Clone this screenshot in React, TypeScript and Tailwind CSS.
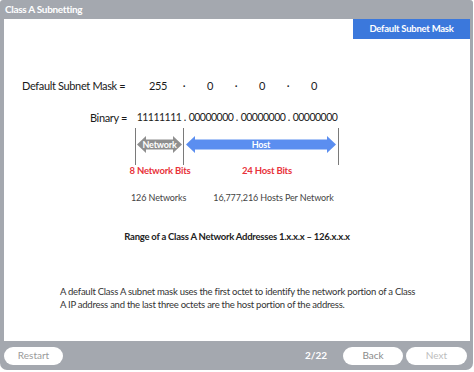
import React from "react";

const font = { fontFamily: "Lato, 'Open Sans', sans-serif" };

function DoubleArrow({ width, color, label }: { width: number; color: string; label: string }) {
  const h = 17;
  const head = 9;
  const shaft = 5;
  const mid = h / 2;
  const pts = [
    [0, mid],
    [head, 0],
    [head, mid - shaft],
    [width - head, mid - shaft],
    [width - head, 0],
    [width, mid],
    [width - head, h],
    [width - head, mid + shaft],
    [head, mid + shaft],
    [head, h],
  ]
    .map((p) => p.join(","))
    .join(" ");
  return (
    <div className="relative" style={{ width, height: h }}>
      <svg width={width} height={h} viewBox={`0 0 ${width} ${h}`} className="block">
        <polygon points={pts} fill={color} />
      </svg>
      <span className="absolute inset-0 flex items-center justify-center text-[9px] tracking-[-0.2px] font-bold text-white leading-none">
        {label}
      </span>
    </div>
  );
}

export default function App() {
  const cells = ["255", "·", "0", "·", "0", "·", "0"];
  const octets = ["11111111", ".", "00000000", ".", "00000000", ".", "00000000"];
  return (
    <div className="w-[474px] h-[372px] bg-white" style={font}>
      <div className="w-[473px] h-[370px] bg-[#a4a8af] rounded-t-[3px] rounded-b-[7px] flex flex-col">
        {/* title bar */}
        <div className="h-[19px] flex items-center pl-[5px] text-[10px] tracking-[-0.3px] font-bold text-white">
          Class A Subnetting
        </div>

        {/* content */}
        <div className="ml-[4px] mr-[3px] h-[322px] bg-white flex flex-col">
          <div className="flex justify-end">
            <button className="w-[117px] h-[20px] bg-[#3b78dc] text-white text-[9.5px] tracking-[-0.25px] font-bold">
              Default Subnet Mask
            </button>
          </div>

          {/* subnet mask row */}
          <div className="mt-[40px] h-[14px] flex items-center text-[11px] tracking-[-0.35px] text-[#1a1a1a]">
            <div className="w-[141px] pl-[18px] whitespace-nowrap">Default Subnet Mask =</div>
            {cells.map((c, i) => (
              <div key={i} className="w-[26px] text-center">
                {c}
              </div>
            ))}
          </div>

          {/* binary row */}
          <div className="mt-[18px] h-[14px] flex items-center text-[11px] text-[#1a1a1a]">
            <div className="w-[123px] text-right tracking-[-0.35px] whitespace-nowrap">Binary =</div>
            <div className="w-[9px]" />
            {octets.map((c, i) => (
              <div
                key={i}
                className={(i % 2 === 0 ? "w-[46px] tracking-[-0.5px]" : "w-[6px]") + " text-center text-[10.5px]"}
              >
                {c}
              </div>
            ))}
          </div>

          {/* arrows */}
          <div className="mt-[3px] h-[37px] flex ml-[131px]">
            <div className="w-[48px] border-l border-[#7a7a7a] flex items-center justify-center pb-[4px]">
              <DoubleArrow width={45} color="#8f8f8f" label="Network" />
            </div>
            <div className="w-[156px] border-l border-r border-[#7a7a7a] flex items-center justify-center pb-[4px]">
              <DoubleArrow width={150} color="#5b8ef0" label="Host" />
            </div>
          </div>

          <div className="h-[12px] flex items-center text-[9.5px] tracking-[-0.2px] font-bold text-[#e8323a] whitespace-nowrap">
            <div className="ml-[122px] w-[68px] text-center">8 Network Bits</div>
            <div className="ml-[38px] w-[70px] text-center">24 Host Bits</div>
          </div>

          <div className="mt-[15px] h-[12px] flex items-center text-[9px] tracking-[-0.1px] text-[#444] whitespace-nowrap">
            <div className="ml-[127px]">126 Networks</div>
            <div className="ml-[27px]">16,777,216 Hosts Per Network</div>
          </div>

          <div className="mt-[27px] h-[12px] flex items-center justify-center text-[9.5px] tracking-[-0.25px] font-bold text-[#222] whitespace-nowrap">
            Range of a Class A Network Addresses 1.x.x.x – 126.x.x.x
          </div>

          <p className="mt-[42px] ml-[56px] text-[9.5px] tracking-[-0.25px] leading-[13px] text-[#333] whitespace-nowrap">
            A default Class A subnet mask uses the first octet to identify the network portion of a Class
            <br />A IP address and the last three octets are the host portion of the address.
          </p>
        </div>

        {/* footer */}
        <div className="flex-1 flex items-center pl-[4px] pr-[6px]">
          <button className="w-[59px] h-[18px] rounded-full bg-white text-[10px] text-[#9a9a9a]">Restart</button>
          <div className="flex-1" />
          <span className="text-[10px] font-bold text-white mr-[16px]">2/22</span>
          <button className="w-[60px] h-[18px] rounded-full bg-white text-[10px] text-[#8a8a8a]">Back</button>
          <button className="ml-[3px] w-[61px] h-[18px] rounded-full bg-white text-[10px] text-[#bdbdbd]">Next</button>
        </div>
      </div>
    </div>
  );
}
